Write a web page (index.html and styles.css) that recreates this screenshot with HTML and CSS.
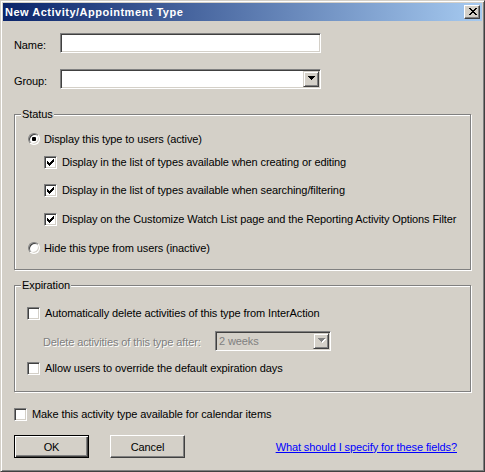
FILE: index.html
```html
<!DOCTYPE html>
<html lang="en">
<head>
<meta charset="utf-8">
<title>New Activity/Appointment Type</title>
<link rel="stylesheet" href="styles.css">
</head>
<body>
<div class="window">
  <div class="titlebar">
    <span class="title">New Activity/Appointment Type</span>
    <span class="close"><svg width="8" height="7" viewBox="0 0 8 7" shape-rendering="crispEdges"><path d="M0 0h2v1H0zM6 0h2v1H6zM1 1h2v1H1zM5 1h2v1H5zM2 2h4v1H2zM3 3h2v1H3zM2 4h4v1H2zM1 5h2v1H1zM5 5h2v1H5zM0 6h2v1H0zM6 6h2v1H6z" fill="#000"/></svg></span>
  </div>
  <div class="content">
    <div class="fields">
      <label class="field-label">Name:</label>
      <div class="edit"></div>
      <label class="field-label">Group:</label>
      <div class="combo combo-wide">
        <span class="combo-value"></span>
        <span class="drop"><svg width="7" height="4" viewBox="0 0 7 4" shape-rendering="crispEdges"><path d="M0 0h7v1H0zM1 1h5v1H1zM2 2h3v1H2zM3 3h1v1H3z" fill="#000"/></svg></span>
      </div>
    </div>

    <fieldset class="group status">
      <legend>Status</legend>
      <div class="group-body status-body">
        <div class="opt"><span class="radio on"></span>Display this type to users (active)</div>
        <div class="opt sub sub-first"><span class="check"><svg width="7" height="7" viewBox="0 0 7 7" shape-rendering="crispEdges"><path d="M0 2h1v3H0zM1 3h1v3H1zM2 4h1v3H2zM3 3h1v3H3zM4 2h1v3H4zM5 1h1v3H5zM6 0h1v3H6z" fill="#000"/></svg></span>Display in the list of types available when creating or editing</div>
        <div class="opt sub sub-next"><span class="check"><svg width="7" height="7" viewBox="0 0 7 7" shape-rendering="crispEdges"><path d="M0 2h1v3H0zM1 3h1v3H1zM2 4h1v3H2zM3 3h1v3H3zM4 2h1v3H4zM5 1h1v3H5zM6 0h1v3H6z" fill="#000"/></svg></span>Display in the list of types available when searching/filtering</div>
        <div class="opt sub sub-last"><span class="check"><svg width="7" height="7" viewBox="0 0 7 7" shape-rendering="crispEdges"><path d="M0 2h1v3H0zM1 3h1v3H1zM2 4h1v3H2zM3 3h1v3H3zM4 2h1v3H4zM5 1h1v3H5zM6 0h1v3H6z" fill="#000"/></svg></span>Display on the Customize Watch List page and the Reporting Activity Options Filter</div>
        <div class="opt radio-last"><span class="radio"></span>Hide this type from users (inactive)</div>
      </div>
    </fieldset>

    <fieldset class="group expiration">
      <legend>Expiration</legend>
      <div class="group-body expiration-body">
        <div class="opt"><span class="check"></span>Automatically delete activities of this type from InterAction</div>
        <div class="delete-row">
          <span class="disabled-label">Delete activities of this type after:</span>
          <div class="combo combo-disabled">
            <span class="combo-value">2 weeks</span>
            <span class="drop"><svg width="8" height="5" viewBox="0 0 8 5" shape-rendering="crispEdges"><path d="M1 1h7v1H1zM2 2h5v1H2zM3 3h3v1H3zM4 4h1v1H4z" fill="#fff"/><path d="M0 0h7v1H0zM1 1h5v1H1zM2 2h3v1H2zM3 3h1v1H3z" fill="#808080"/></svg></span>
          </div>
        </div>
        <div class="opt override"><span class="check"></span>Allow users to override the default expiration days</div>
      </div>
    </fieldset>

    <div class="opt calendar"><span class="check"></span>Make this activity type available for calendar items</div>

    <div class="buttons">
      <span class="btn btn-default">OK</span>
      <span class="btn">Cancel</span>
      <a class="help-link" href="#">What should I specify for these fields?</a>
    </div>
  </div>
</div>
</body>
</html>
```

FILE: styles.css
```css
* { box-sizing: border-box; }

html, body {
  margin: 0;
  padding: 0;
  background: #d4d0c8;
}

body {
  font-family: "Liberation Sans", Arial, sans-serif;
  font-size: 11px;
  letter-spacing: -0.1px;
  color: #000;
}

.window {
  width: 485px;
  height: 472px;
  display: flex;
  flex-direction: column;
  background: #d4d0c8;
  border: 1px solid;
  border-color: #d4d0c8 #404040 #404040 #d4d0c8;
  box-shadow: inset 1px 1px 0 #fff, inset -1px -1px 0 #808080;
  padding: 2px;
}

.titlebar {
  height: 18px;
  flex: none;
  display: flex;
  align-items: center;
  justify-content: space-between;
  padding: 0 2px;
  background: linear-gradient(to right, #0a246a, #a6caf0);
}

.title {
  color: #fff;
  font-weight: bold;
  letter-spacing: 0.5px;
  line-height: 18px;
  white-space: nowrap;
}

.close {
  width: 16px;
  height: 14px;
  display: flex;
  align-items: flex-start;
  padding: 2px 0 0 4px;
  background: #d4d0c8;
  border: 1px solid;
  border-color: #fff #404040 #404040 #fff;
  box-shadow: inset -1px -1px 0 #808080;
}

.close svg, .drop svg, .check svg { display: block; }

.content {
  flex: 1;
  padding: 12px 11px 0 11px;
}

.fields {
  display: grid;
  grid-template-columns: 46px 261px;
  grid-auto-rows: 20px;
  row-gap: 16px;
}

.field-label {
  line-height: 24px;
  white-space: nowrap;
}

.edit {
  height: 20px;
  background: #fff;
  border: 1px solid;
  border-color: #808080 #fff #fff #808080;
  box-shadow: inset 1px 1px 0 #404040, inset -1px -1px 0 #d4d0c8;
}

.combo {
  height: 20px;
  display: flex;
  padding: 1px;
  background: #fff;
  border: 1px solid;
  border-color: #808080 #fff #fff #808080;
  box-shadow: inset 1px 1px 0 #404040, inset -1px -1px 0 #d4d0c8;
}

.combo-value {
  flex: 1;
  padding-left: 2px;
  line-height: 16px;
  white-space: nowrap;
}

.drop {
  width: 16px;
  height: 16px;
  flex: none;
  padding: 4px 0 0 4px;
  background: #d4d0c8;
  border: 1px solid;
  border-color: #d4d0c8 #404040 #404040 #d4d0c8;
  box-shadow: inset 1px 1px 0 #fff, inset -1px -1px 0 #808080;
}

.combo-disabled {
  width: 116px;
  background: #d4d0c8;
}

.combo-disabled .combo-value { color: #808080; }

.group {
  margin: 0;
  padding: 0;
  min-width: 0;
  border: 1px solid #808080;
  box-shadow: inset 1px 1px 0 #fff, 1px 1px 0 #fff;
}

.group legend {
  margin-left: 6px;
  padding: 0 1px;
  line-height: 13px;
  background: #d4d0c8;
}

.status { margin-top: 19px; }
.expiration { margin-top: 9px; }

.group-body {
  display: flex;
  flex-direction: column;
  padding-left: 12px;
}

.status-body { padding-top: 12px; padding-bottom: 14px; }
.expiration-body { padding-top: 15px; padding-bottom: 16px; }

.opt {
  display: flex;
  align-items: flex-start;
  height: 13px;
  line-height: 13px;
  white-space: nowrap;
}

.sub { padding-left: 17px; }
.sub-first { margin-top: 10px; }
.sub-next { margin-top: 15px; }
.sub-last { margin-top: 16px; }
.radio-last { margin-top: 16px; }

.check {
  flex: none;
  width: 13px;
  height: 13px;
  margin-right: 5px;
  padding: 2px;
  background: #fff;
  border: 1px solid;
  border-color: #808080 #fff #fff #808080;
  box-shadow: inset 1px 1px 0 #404040, inset -1px -1px 0 #d4d0c8;
}

.radio {
  flex: none;
  width: 12px;
  height: 12px;
  margin: 0 4px 0 1px;
  border-radius: 50%;
  display: flex;
  align-items: center;
  justify-content: center;
  background: #fff;
  border: 1px solid;
  border-color: #808080 #fff #fff #808080;
  box-shadow: inset 1px 1px 0 #404040, inset -1px -1px 0 #d4d0c8;
}

.radio.on::after {
  content: "";
  width: 4px;
  height: 4px;
  border-radius: 1px;
  background: #000;
}

.delete-row {
  display: flex;
  align-items: flex-start;
  height: 20px;
  margin-top: 11px;
  padding-left: 16px;
}

.disabled-label {
  width: 172px;
  flex: none;
  line-height: 22px;
  color: #808080;
  text-shadow: 1px 1px 0 #fff;
  white-space: nowrap;
}

.override { margin-top: 11px; }

.calendar { margin-top: 16px; }

.buttons {
  display: flex;
  align-items: center;
  margin-top: 14px;
  height: 23px;
}

.btn {
  width: 75px;
  height: 23px;
  display: flex;
  align-items: center;
  justify-content: center;
  background: #d4d0c8;
  border: 1px solid;
  border-color: #fff #404040 #404040 #fff;
  box-shadow: inset -1px -1px 0 #808080;
}

.btn + .btn { margin-left: 21px; }

.btn-default {
  border-color: #000;
  box-shadow: inset 1px 1px 0 #fff, inset -1px -1px 0 #404040, inset -2px -2px 0 #808080;
}

.help-link {
  margin-left: auto;
  margin-right: 14px;
  color: #0000ff;
  text-decoration: underline;
  white-space: nowrap;
}
```
